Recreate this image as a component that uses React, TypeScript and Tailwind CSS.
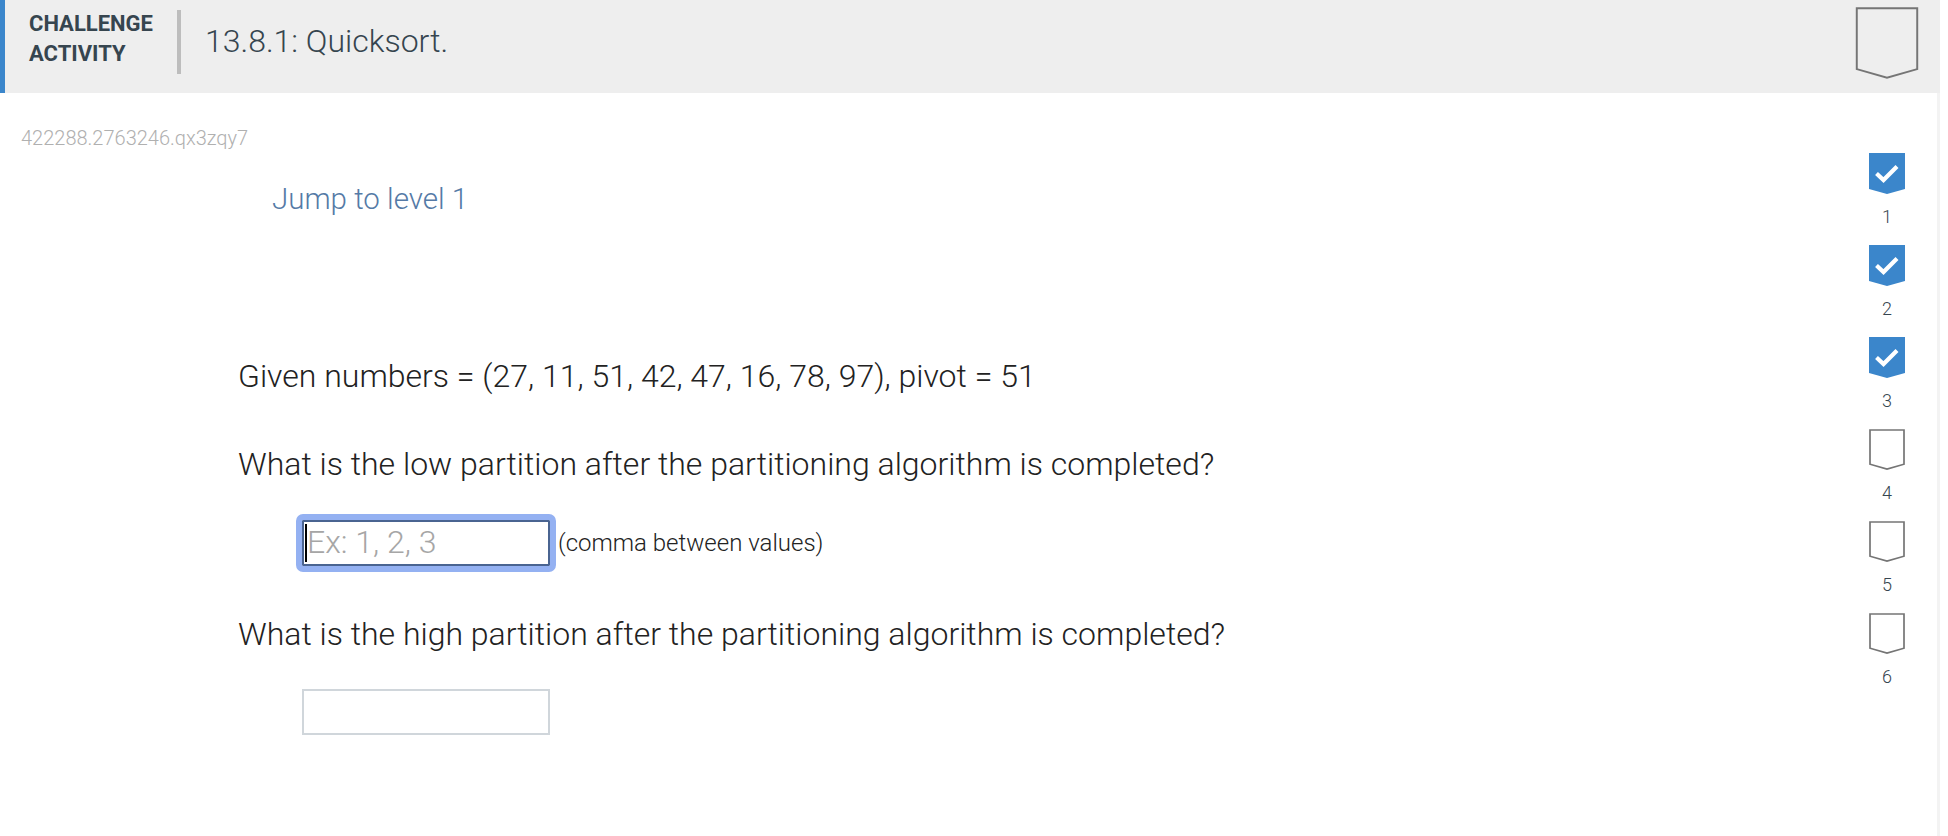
const font = { fontFamily: 'Roboto, sans-serif' };

function Badge({ done, big }: { done?: boolean; big?: boolean }) {
  const w = big ? 64 : 36;
  const h = big ? 74 : 41;
  return (
    <svg width={w} height={h} viewBox="0 0 36 41" className="block">
      {done ? (
        <>
          <path d="M0 0H36V36L18 41L0 36Z" fill="#3b86cb" />
          <path d="M7.5 20.5L14.5 27L28 13.5" fill="none" stroke="#fff" strokeWidth="4.2" />
        </>
      ) : (
        <path
          d="M1 1H35V35.2L18 40L1 35.2Z"
          fill="none"
          stroke="#757575"
          strokeWidth={big ? 1.1 : 1.7}
        />
      )}
    </svg>
  );
}

export default function App() {
  return (
    <div className="w-[1948px] h-[836px] overflow-hidden bg-white" style={font}>
      <header className="flex h-[93px] w-[1940px] items-start bg-[#eeeeee] border-l-[5px] border-[#3b86cb]">
        <div className="ml-[24px] mt-[9px] w-[148px] text-[22px] leading-[30px] font-bold text-[#36454f]">
          CHALLENGE
          <br />
          ACTIVITY
        </div>
        <div className="mt-[10px] h-[64px] w-[4px] bg-[#bdbdbd]" />
        <div className="ml-[24px] mt-[21px] flex-1 text-[32px] leading-[40px] font-light text-[#36454f]">13.8.1: Quicksort.</div>
        <div className="mr-[21px] mt-[6px]">
          <Badge big />
        </div>
      </header>
      <main className="flex h-[743px] w-[1940px] border-r-[3px] border-[#f3f3f3]">
        <section className="flex-1">
          <div className="ml-[21px] mt-[32px] text-[20px] leading-[26px] font-light text-[#b0b0b0]">
            422288.2763246.qx3zqy7
          </div>
          <div className="ml-[272px] mt-[28px] text-[29.5px] leading-[40px] font-light text-[#557aa6]">
            Jump to level 1
          </div>
          <div className="ml-[238px] mt-[137px] text-[32px] leading-[40px] font-light text-[#222222]">
            Given numbers = (27, 11, 51, 42, 47, 16, 78, 97), pivot = 51
          </div>
          <div className="ml-[238px] mt-[48px] text-[32px] leading-[40px] font-light text-[#222222]">
            What is the low partition after the partitioning algorithm is completed?
          </div>
          <div className="ml-[302px] mt-[36px] flex items-center">
            <div className="flex h-[46px] w-[248px] items-center border-2 border-[#4a6491] bg-white outline-[6px] outline-[#94b1f2] rounded-[1px] pl-[1px]">
              <span className="h-[38px] w-[2px] bg-black" />
              <span className="-mt-[2px] text-[32px] leading-[40px] font-light text-[#a6a6a6]">Ex: 1, 2, 3</span>
            </div>
            <span className="ml-[8px] text-[24px] font-light text-[#222222]">(comma between values)</span>
          </div>
          <div className="ml-[238px] mt-[48px] text-[32px] leading-[40px] font-light text-[#222222]">
            What is the high partition after the partitioning algorithm is completed?
          </div>
          <div className="ml-[302px] mt-[35px] h-[46px] w-[248px] border-2 border-[#d0d6db] bg-white" />
        </section>
        <aside className="mr-[32px] w-[36px] pt-[60px]">
          {[1, 2, 3, 4, 5, 6].map((n) => (
            <div key={n} className="flex h-[92px] flex-col items-center">
              <Badge done={n <= 3} />
              <span className="mt-[11px] text-[18px] leading-[24px] font-light text-[#36454f]">{n}</span>
            </div>
          ))}
        </aside>
      </main>
    </div>
  );
}
